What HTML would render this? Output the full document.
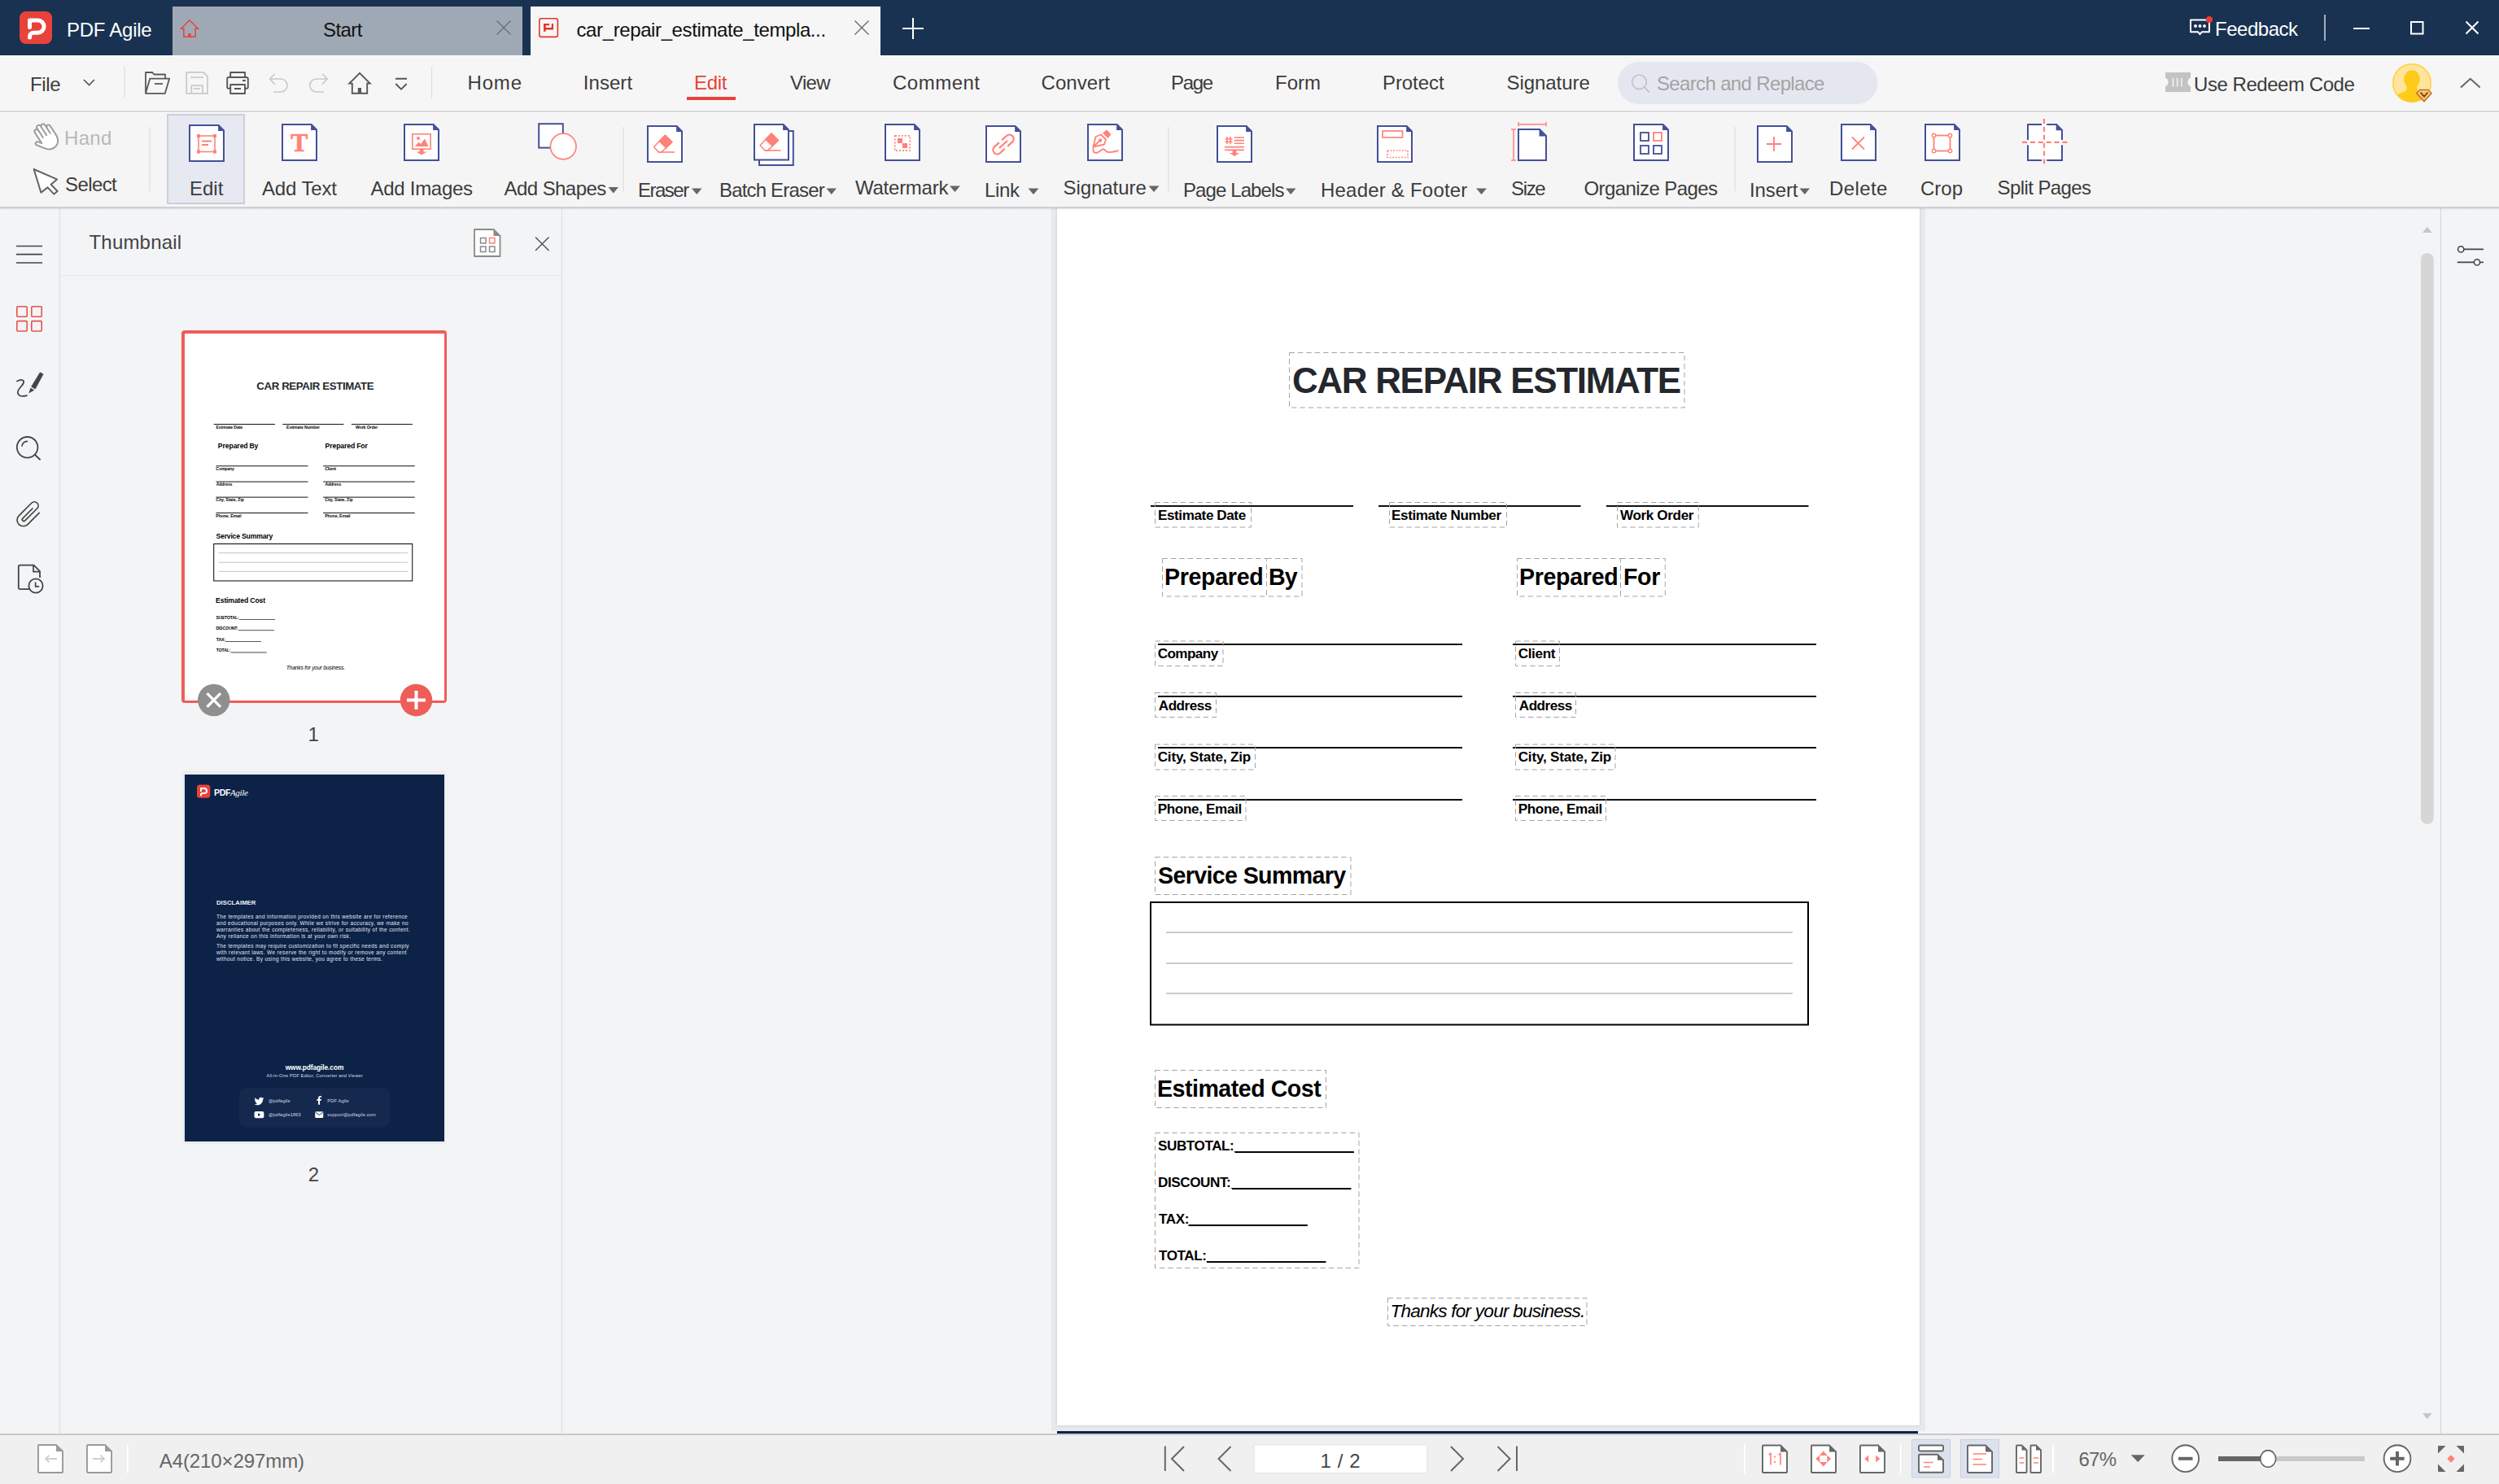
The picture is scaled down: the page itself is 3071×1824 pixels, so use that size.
<!DOCTYPE html>
<html lang="en"><head><meta charset="utf-8"><title>PDF Agile - car_repair_estimate_template</title>
<style>
html,body{margin:0;padding:0;width:3071px;height:1824px}
body{background:#f3f4f6;font-family:'Liberation Sans',sans-serif;position:relative}
#app{position:absolute;left:0;top:0;width:3071px;height:1824px;overflow:hidden}
.t{position:absolute;line-height:1;white-space:pre;margin:0}
.ico{position:absolute;left:0;top:0;overflow:visible}
.titlebar{position:absolute;left:0;top:0;width:3071px;height:68px;background:#193251;border-bottom:1px solid #fdfdfd;z-index:5}
.tab{position:absolute;top:8px;height:60px}
.tab-start{left:212px;width:430px;background:#9fa9b5}
.tab-active{left:652px;width:430px;background:#f6f6f6;height:61px}
.menubar{position:absolute;left:0;top:68px;width:3071px;height:67px;margin-top:1px;background:#f6f6f6;z-index:4}
.menubar .ico,.menubar .t{margin-top:-1px}
.ribbon{position:absolute;left:0;top:138px;width:3071px;height:116px;background:#f5f5f5;z-index:4;box-shadow:0 -2px 0 0 #dadada, inset 0 1px 0 0 #fafafa}
.ribbon-edge{position:absolute;left:0;top:253.5px;width:3071px;height:4.5px;z-index:6;background:linear-gradient(to bottom,#f5f5f5 0,#cfd0d6 9%,#cfd0d6 38%,rgba(150,150,150,.32) 42%,rgba(160,160,160,0) 100%)}
.btn-active{position:absolute;left:205px;top:2px;width:91.5px;height:107px;background:#e7e9f2;border:2px solid #cdced5}
.sidebar{position:absolute;left:0;top:256px;width:73px;height:1507px;border-right:1px solid #dcdcde;background:#f3f4f6}
.thumb-panel{position:absolute;left:74px;top:256px;width:616px;height:1507px;border-right:1px solid #dcdcde;background:#f3f4f6}
.panel-head{position:absolute;left:0;top:0;width:616px;height:82px;border-bottom:1px solid #e7e7ea}
.thumb{position:absolute}
.thumb-1{left:149px;top:150px;width:317.75px;height:450px;border:4px solid #ee5d57;border-radius:4px;background:#fff}
.thumb-1 .thumb-page{left:-.5px;top:-.5px}
.thumb-2{left:150px;top:692px;width:323.5px;height:458px;background:#ebecef;border-radius:2px}
.thumb-page{position:absolute;left:0;top:0;width:319px;height:451px;overflow:hidden;background:#fff}
.thumb-2 .thumb-page{left:2.75px;top:4px;height:450.75px}
.thumb-page.dark{background:#0c2247}
.mini{position:absolute;left:1.3px;top:.2px;width:1060px;height:1499px;transform:scale(0.302);transform-origin:0 0}
.disc{position:absolute;margin:0;font-size:6.5px;line-height:8.03px;letter-spacing:.36px;color:#e3e7ef;white-space:pre}
.doc-view{position:absolute;left:691px;top:256px;width:2380px;height:1507px;overflow:hidden;background:#f3f4f6}
.pdf-page{position:absolute;width:1060px;height:1499px;background:#fff;box-shadow:0 0 3px 0 rgba(0,0,0,.16),0 0 0 7px #e8e9ec}
.next-page{position:absolute;width:1058px;height:10px;background:#0c2247}
.statusbar{position:absolute;left:0;top:1762px;width:3071px;height:62px;background:#f0f0f0;border-top:2px solid #c9c9c9;box-sizing:border-box}
.statusbar .ico{top:-1px}.statusbar .t{margin-top:-1px}
</style></head>
<body><div id="app">
<header class="titlebar"><div class="tab tab-start"></div><div class="tab tab-active"></div><svg class="ico" width="3071" height="68" viewBox="0 0 3071 68"><rect x="24" y="14" width="40" height="40" rx="8" fill="#e8433a"/><path d="M36.5,33.5 V25 H46.5 a7.6,7.6 0 0 1 0,15.2 H41.2 a4.7,4.7 0 0 0 -4.7,4.7 V46" fill="none" stroke="#fff" stroke-width="5" stroke-linecap="round" stroke-linejoin="round"/><path d="M233,24.8 L222.6,35.3 H225.8 V45.3 H240.2 V35.3 H243.4 Z" fill="none" stroke="#e8433a" stroke-width="1.5" stroke-linejoin="miter"/><rect x="231.3" y="41" width="3.4" height="4.3" fill="#e8433a"/><path d="M610.5,25.5 L627.5,42.5 M627.5,25.5 L610.5,42.5" stroke="#6a6f76" stroke-width="1.4"/><rect x="662.8" y="22.8" width="22.6" height="22.6" rx="2.5" fill="none" stroke="#e6352b" stroke-width="1.6"/><path d="M668,29 H675 V31.2 H670.7 V34 H677.8 V29 H680 V36.5 H670.7 V38.8 H668 Z" fill="#e6352b"/><path d="M1050.5,25.5 L1067.5,42.5 M1067.5,25.5 L1050.5,42.5" stroke="#6a6a6a" stroke-width="1.4"/><path d="M1109,35 H1135 M1122,22 V48" stroke="#fff" stroke-width="2"/><path d="M2692,24.5 H2715 V39.2 H2706 L2703.5,42.2 L2701,39.2 H2692 Z" fill="none" stroke="#fff" stroke-width="2" stroke-linejoin="round"/><circle cx="2698" cy="32" r="1.9" fill="#fff"/><circle cx="2703.5" cy="32" r="1.9" fill="#fff"/><circle cx="2709" cy="32" r="1.9" fill="#fff"/><circle cx="2715" cy="24" r="4" fill="#ee3b33"/><path d="M2857,18 V50" stroke="#c9ced6" stroke-width="1.6"/><path d="M2892,35 H2912" stroke="#fff" stroke-width="2"/><rect x="2963" y="27" width="14.5" height="14.5" fill="none" stroke="#fff" stroke-width="2"/><path d="M3030.5,26.5 L3045.5,41.5 M3045.5,26.5 L3030.5,41.5" stroke="#fff" stroke-width="2"/></svg><span class="t" style="left:82.0px;top:25.0px;font-size:24px;color:#fff;letter-spacing:-0.25px;">PDF Agile</span>
<span class="t" style="left:397.0px;top:25.0px;font-size:24px;color:#111;letter-spacing:-0.56px;">Start</span>
<span class="t" style="left:708.5px;top:25.0px;font-size:24px;color:#111;letter-spacing:-0.39px;">car_repair_estimate_templa...</span>
<span class="t" style="left:2722.0px;top:24.0px;font-size:24px;color:#fff;letter-spacing:-0.47px;">Feedback</span></header>
<nav class="menubar"><svg class="ico" width="3071" height="70" viewBox="0 68 3071 70"><path d="M103,98 L109.5,104.5 L116,98" fill="none" stroke="#585858" stroke-width="1.7"/><path d="M153,82 V121 M530.5,82 V121" stroke="#dedede" stroke-width="1.2"/><g fill="none" stroke="#585858" stroke-width="1.8" stroke-linejoin="round"><path d="M179,114.8 V89 H187.3 L189.3,91.5 H203 V96.6"/><path d="M184.3,96.6 H208.2 L202.8,114.8 H179 Z"/><path d="M190,103 H200"/></g><g fill="none" stroke="#c9c9c9" stroke-width="1.7" stroke-linejoin="round"><path d="M229.2,88.9 H250 L255,93.8 V114.9 H229.2 Z"/><path d="M234,95 H250"/><path d="M235.3,114.9 V105.2 H249 V114.9"/><path d="M238.3,109 H246"/></g><g fill="none" stroke="#585858" stroke-width="1.9" stroke-linejoin="round"><path d="M283.2,95 V89 H301 V95"/><path d="M283.2,108.8 H281 a1.8,1.8 0 0 1 -1.8,-1.8 V96.8 a1.8,1.8 0 0 1 1.8,-1.8 H303 a1.8,1.8 0 0 1 1.8,1.8 V107 a1.8,1.8 0 0 1 -1.8,1.8 H301"/><rect x="283.2" y="104" width="17.8" height="11"/><path d="M298,99 H301.8 M288,109 H296"/></g><g fill="none" stroke="#c9c9c9" stroke-width="1.6"><path d="M337.8,90.8 L331.6,97 L337.8,103.6"/><path d="M332,97 H345 a8,8 0 0 1 0,16 H336"/></g><g fill="none" stroke="#c9c9c9" stroke-width="1.6"><path d="M396,90.8 L402.2,97 L396,103.6"/><path d="M401.8,97 H388.8 a8,8 0 0 0 0,16 H397.8"/></g><path d="M442,89.8 L429.3,102.6 H432.8 V114.8 H451.2 V102.6 H454.7 Z" fill="none" stroke="#585858" stroke-width="1.9"/><rect x="439.8" y="108" width="4.2" height="6.8" fill="#585858"/><path d="M486,96.8 H500 M486.3,103 L493,109.6 L499.7,103" fill="none" stroke="#585858" stroke-width="1.9"/><rect x="844" y="119" width="60" height="4" fill="#e8423a"/><rect x="1988" y="76" width="319.5" height="52" rx="26" fill="#e5e7f0"/><circle cx="2014.5" cy="100.8" r="8.8" fill="none" stroke="#c2c2c2" stroke-width="1.7"/><path d="M2020.8,107.2 L2027,113.6" stroke="#c2c2c2" stroke-width="1.9"/><path d="M2661,89 H2692 V96 A3.6,5 0 0 0 2692,106 V113 H2661 V106 A3.6,5 0 0 0 2661,96 Z" fill="#c3c3c3"/><path d="M2670.4,96 V106.6 M2675.7,96 V106.6 M2681,96 V106.6" stroke="#ededed" stroke-width="1.9"/><defs><clipPath id="avc"><circle cx="2964" cy="102" r="23.6"/></clipPath></defs><circle cx="2964" cy="102" r="24" fill="#ffe59b"/><circle cx="2964" cy="102" r="23.2" fill="none" stroke="#ffd040" stroke-width="1.5"/><g clip-path="url(#avc)" fill="#ffcb1a"><ellipse cx="2964" cy="97.4" rx="9.9" ry="11.2"/><path d="M2957.5,104 V109 C2957.5,111.5 2955,112.6 2951,114 C2946,116 2943.5,119 2942.5,124 V130 H2985.5 V124 C2984.5,119 2982,116 2977,114 C2973,112.6 2970.5,111.5 2970.5,109 V104 Z"/></g><path d="M2969.6,114.6 L2973.6,110.4 H2984.4 L2988.2,114.6 L2979,124.8 Z" fill="#f6c06e" stroke="#b06a1e" stroke-width="1.3" stroke-linejoin="round"/><path d="M2974.6,113.6 L2979,118.6 L2983.4,113.6" fill="none" stroke="#7d3f0c" stroke-width="1.7"/><path d="M3024,107.5 L3035.8,96.8 L3047.6,107.5" fill="none" stroke="#666" stroke-width="2"/></svg><span class="t" style="left:37.0px;top:23.5px;font-size:24px;color:#3c3c3c;letter-spacing:-0.33px;">File</span>
<span class="t" style="left:574.5px;top:22.0px;font-size:24px;color:#3c3c3c;letter-spacing:0.83px;">Home</span>
<span class="t" style="left:716.8px;top:22.0px;font-size:24px;color:#3c3c3c;letter-spacing:0.05px;">Insert</span>
<span class="t" style="left:971.0px;top:22.0px;font-size:24px;color:#3c3c3c;letter-spacing:-0.67px;">View</span>
<span class="t" style="left:1097.0px;top:22.0px;font-size:24px;color:#3c3c3c;letter-spacing:0.50px;">Comment</span>
<span class="t" style="left:1279.5px;top:22.0px;font-size:24px;color:#3c3c3c;letter-spacing:0.08px;">Convert</span>
<span class="t" style="left:1439.0px;top:22.0px;font-size:24px;color:#3c3c3c;letter-spacing:-1.33px;">Page</span>
<span class="t" style="left:1567.0px;top:22.0px;font-size:24px;color:#3c3c3c;">Form</span>
<span class="t" style="left:1699.0px;top:22.0px;font-size:24px;color:#3c3c3c;letter-spacing:-0.08px;">Protect</span>
<span class="t" style="left:1851.5px;top:22.0px;font-size:24px;color:#3c3c3c;letter-spacing:-0.06px;">Signature</span>
<span class="t" style="left:853.0px;top:22.0px;font-size:24px;color:#e8423a;letter-spacing:-0.33px;">Edit</span>
<span class="t" style="left:2036.0px;top:22.5px;font-size:24px;color:#a3a3a3;letter-spacing:-0.65px;">Search and Replace</span>
<span class="t" style="left:2696.0px;top:23.5px;font-size:24px;color:#3c3c3c;letter-spacing:-0.45px;">Use Redeem Code</span></nav>
<section class="ribbon"><div class="btn-active"></div><svg class="ico" width="3071" height="118" viewBox="0 138 3071 118"><g transform="translate(37.2,148.6) rotate(-33 18 18) scale(1.13)" fill="#fff" stroke="#9c9c9c" stroke-width="1.75" stroke-linejoin="round" stroke-linecap="round"><path d="M8.5,21 V7.2 a2.25,2.25 0 0 1 4.5,0 V4.8 a2.3,2.3 0 0 1 4.6,0 V6.3 a2.3,2.3 0 0 1 4.6,0 V10.2 a2.15,2.15 0 0 1 4.3,0 V21 c0,7.5 -4,11.5 -9.5,11.5 c-4.5,0 -6.6,-1.8 -9,-5.4 L2.7,19.6 c-1.2,-2 1.5,-3.8 3.2,-2 Z"/><path d="M13,7.2 V16.5 M17.6,6.3 V16.5 M22.2,10.2 V17" fill="none"/></g><path d="M41.6,208 L70,220.4 L62.6,226.8 L70.6,235 L66.4,238.6 L58.6,230.4 L50.4,236.6 Z" fill="#fff" stroke="#646464" stroke-width="2" stroke-linejoin="round"/><path d="M184,156 V235" stroke="#dedede" stroke-width="1.2"/><path d="M766,156 V235" stroke="#dedede" stroke-width="1.2"/><path d="M1436,156 V235" stroke="#dedede" stroke-width="1.2"/><path d="M2132,156 V235" stroke="#dedede" stroke-width="1.2"/><path d="M233.0,154.0 H268.6 L275.0,160.4 V198.0 H233.0 Z" fill="#fff" stroke="#444f98" stroke-width="2" stroke-linejoin="miter"/><path d="M268.1,154.0 V160.9 H275.0 Z" fill="#444f98"/><rect x="244" y="167" width="20" height="19.5" fill="none" stroke="#ff8279" stroke-width="1.6"/><rect x="242" y="165" width="4" height="4" fill="#ff8279"/><rect x="262" y="165" width="4" height="4" fill="#ff8279"/><rect x="242" y="184.5" width="4" height="4" fill="#ff8279"/><rect x="262" y="184.5" width="4" height="4" fill="#ff8279"/><path d="M248,173.5 h12 M248,178 h8" stroke="#ff8279" stroke-width="1.8"/><path d="M347.0,153.0 H382.6 L389.0,159.4 V197.0 H347.0 Z" fill="#fff" stroke="#444f98" stroke-width="2" stroke-linejoin="miter"/><path d="M382.1,153.0 V159.9 H389.0 Z" fill="#444f98"/><text x="367.8" y="185.8" text-anchor="middle" font-family="Liberation Serif, serif" font-weight="700" font-size="31.5" fill="#ff8279" stroke="#ff8279" stroke-width="0.7">T</text><path d="M497.0,153.0 H532.6 L539.0,159.4 V197.0 H497.0 Z" fill="#fff" stroke="#444f98" stroke-width="2" stroke-linejoin="miter"/><path d="M532.1,153.0 V159.9 H539.0 Z" fill="#444f98"/><rect x="506.8" y="164.8" width="22.4" height="18.4" fill="none" stroke="#ff8279" stroke-width="1.6"/><circle cx="514" cy="170" r="2" fill="#ff8279"/><path d="M510,180 l4.5,-5.5 l2.5,2.5 l5,-6.5 l4.5,9.5 Z" fill="#ff8279"/><path d="M515.5,184 h5 v2.5 h4.2 l-6.7,4 l-6.7,-4 h4.2 Z" fill="#ff8279"/><rect x="662.2" y="152.2" width="29.6" height="29.4" fill="#fff" stroke="#444f98" stroke-width="2"/><circle cx="692.2" cy="180" r="15.8" fill="#fff" stroke="#ff8279" stroke-width="1.7"/><path d="M796.0,155.0 H831.6 L838.0,161.4 V199.0 H796.0 Z" fill="#fff" stroke="#444f98" stroke-width="2" stroke-linejoin="miter"/><path d="M831.1,155.0 V161.9 H838.0 Z" fill="#444f98"/><path d="M817.4,166.2 L825.8,174.6 L813.0,187.0 L809.3,187.0 L803.6,180.6 Z" fill="#fff" stroke="#ff8279" stroke-width="1.5" stroke-linejoin="round"/><path d="M817.4,166.2 L825.8,174.6 L818.6,181.6 L810.2,173.4 Z" fill="#ff8279" stroke="#ff8279" stroke-width="1.5" stroke-linejoin="round"/><path d="M809.3,187.0 H829.0" stroke="#ff8279" stroke-width="1.6"/><path d="M933,161 H974.8 V203 H933 Z" fill="#fff" stroke="#444f98" stroke-width="2"/><path d="M927.0,153.0 H962.6 L969.0,159.4 V196.5 H927.0 Z" fill="#fff" stroke="#444f98" stroke-width="2" stroke-linejoin="miter"/><path d="M962.1,153.0 V159.9 H969.0 Z" fill="#444f98"/><path d="M948.0,164.1 L956.4,172.5 L943.6,184.9 L939.9,184.9 L934.2,178.5 Z" fill="#fff" stroke="#ff8279" stroke-width="1.5" stroke-linejoin="round"/><path d="M948.0,164.1 L956.4,172.5 L949.2,179.5 L940.8,171.3 Z" fill="#ff8279" stroke="#ff8279" stroke-width="1.5" stroke-linejoin="round"/><path d="M939.9,184.9 H959.6" stroke="#ff8279" stroke-width="1.6"/><path d="M1088.0,153.0 H1123.6 L1130.0,159.4 V197.0 H1088.0 Z" fill="#fff" stroke="#444f98" stroke-width="2" stroke-linejoin="miter"/><path d="M1123.1,153.0 V159.9 H1130.0 Z" fill="#444f98"/><rect x="1099.8" y="166.8" width="18.4" height="18.4" fill="none" stroke="#ff8279" stroke-width="1.7" stroke-dasharray="2 2"/><rect x="1103" y="170" width="6" height="6" fill="#ff8279"/><rect x="1109" y="176" width="6" height="6" fill="#ff8279"/><path d="M1212.0,155.0 H1247.6 L1254.0,161.4 V199.0 H1212.0 Z" fill="#fff" stroke="#444f98" stroke-width="2" stroke-linejoin="miter"/><path d="M1247.1,155.0 V161.9 H1254.0 Z" fill="#444f98"/><g transform="rotate(-42 1233 177.5)" fill="none" stroke="#ff8279" stroke-width="2.2" stroke-linecap="round"><path d="M1230,172.3 h-7 a5.2,5.2 0 0 0 0,10.4 h7"/><path d="M1236,172.3 h7 a5.2,5.2 0 0 1 0,10.4 h-7"/><path d="M1227,177.5 h12"/></g><path d="M1337.0,153.0 H1372.6 L1379.0,159.4 V197.0 H1337.0 Z" fill="#fff" stroke="#444f98" stroke-width="2" stroke-linejoin="miter"/><path d="M1372.1,153.0 V159.9 H1379.0 Z" fill="#444f98"/><g fill="none" stroke="#ff8279" stroke-width="1.8" stroke-linecap="round" stroke-linejoin="round"><path d="M1343.5,180.5 l3,-12.5 l6.5,-2.5 l6,6 l-2,6 Z"/><path d="M1343.5,180.5 l8,-7.5"/><circle cx="1352" cy="172.5" r="1.3" fill="#ff8279"/><path d="M1345,178 c-3,5 -2,10 2,10 c4,0 6,-5 9,-4.5 c3,0.5 2,3 6,3.5 c4,0.3 8,-0.5 12,-1.8"/></g><path d="M1355,163.5 l5,-4 l5.5,5.5 l-4,5 Z" fill="#ff8279"/><path d="M1496.0,155.0 H1531.6 L1538.0,161.4 V199.0 H1496.0 Z" fill="#fff" stroke="#444f98" stroke-width="2" stroke-linejoin="miter"/><path d="M1531.1,155.0 V161.9 H1538.0 Z" fill="#444f98"/><g stroke="#ff8279" stroke-width="1.6" fill="none"><path d="M1508,168 v9 M1512,168 v9 M1505.5,170.8 h9 M1505.5,174.3 h9"/><path d="M1516.5,169 h12.5 M1516.5,172.6 h12.5 M1516.5,176.2 h12.5 M1505,180.6 h24 M1505,184.4 h24"/></g><path d="M1514.7,185 h4.6 v3 h3.8 l-6.1,4 l-6.1,-4 h3.8 Z" fill="#ff8279"/><path d="M1693.0,155.0 H1728.6 L1735.0,161.4 V199.0 H1693.0 Z" fill="#fff" stroke="#444f98" stroke-width="2" stroke-linejoin="miter"/><path d="M1728.1,155.0 V161.9 H1735.0 Z" fill="#444f98"/><rect x="1699" y="161" width="24.5" height="8" fill="none" stroke="#ff8279" stroke-width="1.7"/><rect x="1705" y="185" width="25" height="8.5" fill="none" stroke="#ff8279" stroke-width="1.7" stroke-dasharray="1.8 1.8"/><path d="M1866.0,159.0 H1892.0 L1900.0,167.0 V197.0 H1866.0 Z" fill="#fff" stroke="#444f98" stroke-width="2" stroke-linejoin="miter"/><path d="M1891.5,159.0 V167.5 H1900.0 Z" fill="#444f98"/><path d="M1865.5,152.8 H1900.5 M1866,150 V155.6 M1900,150 V155.6 M1860,158.6 V197.4 M1857,159 H1863 M1857,197 H1863" stroke="#ff8279" stroke-width="1.5" fill="none"/><path d="M2008.0,153.0 H2043.6 L2050.0,159.4 V197.0 H2008.0 Z" fill="#fff" stroke="#444f98" stroke-width="2" stroke-linejoin="miter"/><path d="M2043.1,153.0 V159.9 H2050.0 Z" fill="#444f98"/><rect x="2016" y="163" width="10" height="10" fill="none" stroke="#444f98" stroke-width="1.8"/><rect x="2032" y="163" width="10" height="10" fill="none" stroke="#ff8279" stroke-width="1.8"/><rect x="2016" y="179" width="10" height="10" fill="none" stroke="#444f98" stroke-width="1.8"/><rect x="2032" y="179" width="10" height="10" fill="none" stroke="#444f98" stroke-width="1.8"/><path d="M2160.0,155.0 H2195.6 L2202.0,161.4 V199.0 H2160.0 Z" fill="#fff" stroke="#444f98" stroke-width="2" stroke-linejoin="miter"/><path d="M2195.1,155.0 V161.9 H2202.0 Z" fill="#444f98"/><path d="M2171,177 h18 M2180,168 v18" stroke="#ff8279" stroke-width="1.8" fill="none"/><path d="M2263.0,153.0 H2298.6 L2305.0,159.4 V197.0 H2263.0 Z" fill="#fff" stroke="#444f98" stroke-width="2" stroke-linejoin="miter"/><path d="M2298.1,153.0 V159.9 H2305.0 Z" fill="#444f98"/><path d="M2276.0,168.5 l15,15 M2291.0,168.5 l-15,15" stroke="#ff8279" stroke-width="1.8" fill="none"/><path d="M2366.0,153.0 H2401.6 L2408.0,159.4 V197.0 H2366.0 Z" fill="#fff" stroke="#444f98" stroke-width="2" stroke-linejoin="miter"/><path d="M2401.1,153.0 V159.9 H2408.0 Z" fill="#444f98"/><rect x="2376.5" y="166.5" width="20.0" height="19.0" fill="none" stroke="#ff8279" stroke-width="1.8"/><circle cx="2376.5" cy="166.5" r="2.2" fill="#fff" stroke="#ff8279" stroke-width="1.4"/><circle cx="2396.5" cy="166.5" r="2.2" fill="#fff" stroke="#ff8279" stroke-width="1.4"/><circle cx="2376.5" cy="185.5" r="2.2" fill="#fff" stroke="#ff8279" stroke-width="1.4"/><circle cx="2396.5" cy="185.5" r="2.2" fill="#fff" stroke="#ff8279" stroke-width="1.4"/><path d="M2492.0,153.0 H2527.2 L2534.0,159.8 V197.0 H2492.0 Z" fill="#fff" stroke="#444f98" stroke-width="2" stroke-linejoin="miter"/><path d="M2526.7,153.0 V160.3 H2534.0 Z" fill="#444f98"/><path d="M2509,153 H2515.2 M2509,197 H2515.2 M2492,171.9 V178.2 M2534,171.9 V178.2" stroke="#fafafa" stroke-width="2.6"/><path d="M2512,146 V202 M2485,174.9 H2541.2" stroke="#ff8279" stroke-width="2.1" stroke-dasharray="6 3.9" fill="none"/><path d="M747.5,230.0 H760 L753.75,237.5 Z" fill="#666"/><path d="M850,231.5 H862.5 L856.25,239 Z" fill="#666"/><path d="M1015.5,231.5 H1028 L1021.75,239 Z" fill="#666"/><path d="M1167,228.5 H1180 L1173.5,236 Z" fill="#666"/><path d="M1263.5,231.5 H1276.5 L1270.0,239 Z" fill="#666"/><path d="M1411.5,228.5 H1424.5 L1418.0,236 Z" fill="#666"/><path d="M1580,231.5 H1592.5 L1586.25,239 Z" fill="#666"/><path d="M1814,231.5 H1827 L1820.5,239 Z" fill="#666"/><path d="M2211.5,231.5 H2224 L2217.75,239 Z" fill="#666"/></svg><span class="t" style="left:79.0px;top:20.0px;font-size:24px;color:#b9b9b9;letter-spacing:0.33px;">Hand</span>
<span class="t" style="left:80.0px;top:77.0px;font-size:24px;color:#3c3c3c;letter-spacing:-0.60px;">Select</span>
<span class="t" style="left:233.0px;top:82.0px;font-size:24px;color:#3c3c3c;">Edit</span>
<span class="t" style="left:322.0px;top:81.5px;font-size:24px;color:#3c3c3c;letter-spacing:-0.14px;">Add Text</span>
<span class="t" style="left:455.5px;top:81.5px;font-size:24px;color:#3c3c3c;letter-spacing:-0.28px;">Add Images</span>
<span class="t" style="left:619.5px;top:82.0px;font-size:24px;color:#3c3c3c;letter-spacing:-0.56px;">Add Shapes</span>
<span class="t" style="left:784.0px;top:83.5px;font-size:24px;color:#3c3c3c;letter-spacing:-1.50px;">Eraser</span>
<span class="t" style="left:884.0px;top:83.5px;font-size:24px;color:#3c3c3c;letter-spacing:-0.82px;">Batch Eraser</span>
<span class="t" style="left:1051.0px;top:80.5px;font-size:24px;color:#3c3c3c;letter-spacing:-0.25px;">Watermark</span>
<span class="t" style="left:1210.0px;top:83.5px;font-size:24px;color:#3c3c3c;letter-spacing:-0.33px;">Link</span>
<span class="t" style="left:1306.5px;top:80.5px;font-size:24px;color:#3c3c3c;letter-spacing:-0.06px;">Signature</span>
<span class="t" style="left:1454.0px;top:83.5px;font-size:24px;color:#3c3c3c;letter-spacing:-0.90px;">Page Labels</span>
<span class="t" style="left:1623.0px;top:83.5px;font-size:24px;color:#3c3c3c;letter-spacing:0.21px;">Header &amp; Footer</span>
<span class="t" style="left:1857.0px;top:81.5px;font-size:24px;color:#3c3c3c;letter-spacing:-1.33px;">Size</span>
<span class="t" style="left:1946.5px;top:81.5px;font-size:24px;color:#3c3c3c;letter-spacing:-0.58px;">Organize Pages</span>
<span class="t" style="left:2150.0px;top:83.5px;font-size:24px;color:#3c3c3c;letter-spacing:-0.10px;">Insert</span>
<span class="t" style="left:2248.0px;top:81.5px;font-size:24px;color:#3c3c3c;letter-spacing:0.40px;">Delete</span>
<span class="t" style="left:2360.0px;top:81.5px;font-size:24px;color:#3c3c3c;">Crop</span>
<span class="t" style="left:2454.6px;top:81.0px;font-size:24px;color:#3c3c3c;letter-spacing:-0.59px;">Split Pages</span></section><div class="ribbon-edge"></div>
<main class="workspace"><aside class="sidebar"><svg class="ico" width="74" height="1507" viewBox="0 256 74 1507"><path d="M20,302.5 H52 M20,312.7 H52 M20,323 H52" stroke="#444" stroke-width="1.7"/><rect x="20.8" y="376.8" width="12.4" height="12.4" rx="1" fill="none" stroke="#e9524a" stroke-width="1.6"/><rect x="38.8" y="376.8" width="12.4" height="12.4" rx="1" fill="none" stroke="#e9524a" stroke-width="1.6"/><rect x="20.8" y="394.6" width="12.4" height="12.4" rx="1" fill="none" stroke="#e9524a" stroke-width="1.6"/><rect x="38.8" y="394.6" width="12.4" height="12.4" rx="1" fill="none" stroke="#e9524a" stroke-width="1.6"/><path d="M21,468.5 c6,-3.500 9.500,-1 7.500,3 c-1.800,3.600 -8,7.500 -6.500,12 c1.200,3.600 6,4 11,2.600" fill="none" stroke="#444" stroke-width="1.8" stroke-linecap="round"/><path d="M49.300,457.800 L53,459.900 L43.300,478 L38.600,475.300 Z" fill="#444" stroke="#444" stroke-width="0.8" stroke-linejoin="round"/><path d="M37.600,476.800 L42.200,479.400 L35.200,483.600 Z" fill="#444"/><circle cx="33.6" cy="549.8" r="12.8" fill="none" stroke="#444" stroke-width="1.8"/><path d="M42.800,558.800 L49.600,565.200" stroke="#444" stroke-width="1.9"/><path d="M27,548 a7,7 0 0 1 6.500,-5.600" fill="none" stroke="#444" stroke-width="1.6" stroke-linecap="round"/><g transform="rotate(135 35 632.800)"><path d="M24,625.200 h20 a7.600,7.600 0 0 1 0,15.200 h-22 a4.800,4.800 0 0 1 0,-9.600 h21 a2,2 0 0 1 0,4 h-17" fill="none" stroke="#444" stroke-width="1.7" stroke-linecap="round"/></g><path d="M41.200,724.200 H24.600 a1.800,1.800 0 0 1 -1.800,-1.800 V696.400 a1.800,1.800 0 0 1 1.800,-1.800 H41.500 L49,702.200 V710" fill="none" stroke="#444" stroke-width="1.8" stroke-linejoin="round"/><path d="M41,695 V702.600 H48.800" fill="none" stroke="#444" stroke-width="1.7"/><circle cx="44" cy="720" r="8.600" fill="#f3f4f6" stroke="#444" stroke-width="1.8"/><path d="M43.600,715.400 V720.800 H48.200" fill="none" stroke="#444" stroke-width="1.7"/></svg></aside>
<aside class="thumb-panel"><div class="panel-head"></div><div class="thumb thumb-1"><div class="thumb-page"><div class="mini"><svg class="ico" width="1060" height="1499" viewBox="0 0 1060 1499"><rect x="115" y="367.35" width="249" height="3.3" fill="#111"/><rect x="395" y="367.35" width="248.5" height="3.3" fill="#111"/><rect x="675" y="367.35" width="248.5" height="3.3" fill="#111"/><rect x="124" y="537.35" width="374" height="3.3" fill="#111"/><rect x="560" y="537.35" width="373" height="3.3" fill="#111"/><rect x="124" y="601.35" width="374" height="3.3" fill="#111"/><rect x="560" y="601.35" width="373" height="3.3" fill="#111"/><rect x="124" y="664.35" width="374" height="3.3" fill="#111"/><rect x="560" y="664.35" width="373" height="3.3" fill="#111"/><rect x="124" y="728.35" width="374" height="3.3" fill="#111"/><rect x="560" y="728.35" width="373" height="3.3" fill="#111"/><rect x="115" y="856" width="808" height="150.5" fill="none" stroke="#000" stroke-width="3.3"/><rect x="134" y="891.5" width="770" height="3" fill="#bcbcbc"/><rect x="134" y="929.5" width="770" height="3" fill="#bcbcbc"/><rect x="134" y="966.5" width="770" height="3" fill="#bcbcbc"/><rect x="218.5" y="1162.15" width="146.5" height="1.9" fill="#000"/><rect x="215" y="1207.15" width="146.5" height="1.9" fill="#000"/><rect x="161.5" y="1252.15" width="146.25" height="1.9" fill="#000"/><rect x="184" y="1297.15" width="146.5" height="1.9" fill="#000"/></svg><span class="t" style="left:288.9px;top:192.8px;font-size:44.0px;color:#24272d;letter-spacing:-1.32px;font-weight:700;">CAR REPAIR ESTIMATE</span>
<span class="t" style="left:124.0px;top:372.0px;font-size:17.1px;color:#000;letter-spacing:-0.41px;font-weight:700;">Estimate Date</span>
<span class="t" style="left:411.0px;top:372.0px;font-size:17.1px;color:#000;letter-spacing:-0.39px;font-weight:700;">Estimate Number</span>
<span class="t" style="left:692.0px;top:372.0px;font-size:17.1px;color:#000;letter-spacing:-0.36px;font-weight:700;">Work Order</span>
<span class="t" style="left:131.9px;top:442.0px;font-size:28.6px;color:#000;letter-spacing:-0.31px;font-weight:700;">Prepared</span>
<span class="t" style="left:259.9px;top:442.0px;font-size:28.6px;color:#000;letter-spacing:-0.70px;font-weight:700;">By</span>
<span class="t" style="left:567.9px;top:442.0px;font-size:28.6px;color:#000;letter-spacing:-0.31px;font-weight:700;">Prepared</span>
<span class="t" style="left:695.9px;top:442.0px;font-size:28.6px;color:#000;letter-spacing:-0.26px;font-weight:700;">For</span>
<span class="t" style="left:123.7px;top:542.0px;font-size:17.1px;color:#000;letter-spacing:-0.57px;font-weight:700;">Company</span>
<span class="t" style="left:566.7px;top:542.0px;font-size:17.1px;color:#000;letter-spacing:-0.33px;font-weight:700;">Client</span>
<span class="t" style="left:124.8px;top:605.5px;font-size:17.1px;color:#000;letter-spacing:-0.48px;font-weight:700;">Address</span>
<span class="t" style="left:567.8px;top:605.5px;font-size:17.1px;color:#000;letter-spacing:-0.48px;font-weight:700;">Address</span>
<span class="t" style="left:123.7px;top:669.0px;font-size:17.1px;color:#000;letter-spacing:-0.19px;font-weight:700;">City, State, Zip</span>
<span class="t" style="left:566.7px;top:669.0px;font-size:17.1px;color:#000;letter-spacing:-0.19px;font-weight:700;">City, State, Zip</span>
<span class="t" style="left:123.7px;top:732.5px;font-size:17.1px;color:#000;letter-spacing:-0.34px;font-weight:700;">Phone, Email</span>
<span class="t" style="left:566.7px;top:732.5px;font-size:17.1px;color:#000;letter-spacing:-0.34px;font-weight:700;">Phone, Email</span>
<span class="t" style="left:124.0px;top:809.3px;font-size:28.6px;color:#000;letter-spacing:-0.63px;font-weight:700;">Service Summary</span>
<span class="t" style="left:122.9px;top:1070.8px;font-size:28.6px;color:#000;letter-spacing:-0.48px;font-weight:700;">Estimated Cost</span>
<span class="t" style="left:124.0px;top:1146.8px;font-size:17.1px;color:#000;letter-spacing:-0.42px;font-weight:700;">SUBTOTAL:________________</span>
<span class="t" style="left:124.0px;top:1191.8px;font-size:17.1px;color:#000;letter-spacing:-0.42px;font-weight:700;">DISCOUNT:________________</span>
<span class="t" style="left:125.0px;top:1236.8px;font-size:17.1px;color:#000;letter-spacing:-0.42px;font-weight:700;">TAX:________________</span>
<span class="t" style="left:125.0px;top:1281.8px;font-size:17.1px;color:#000;letter-spacing:-0.42px;font-weight:700;">TOTAL:________________</span>
<span class="t" style="left:409.4px;top:1348.4px;font-size:22.6px;color:#000;letter-spacing:-0.78px;font-style:italic;">Thanks for your business.</span></div></div></div><div class="thumb thumb-2"><div class="thumb-page dark"><svg class="ico" width="319" height="451" viewBox="0 0 319 451"><rect x="15.0" y="12.5" width="16.3" height="16.3" rx="3.5" fill="#e8433a"/><path d="M19.94999999999999,20.299999999999955 v-3.4 h4 a3,3 0 0 1 0,6.1 h-2.1 a1.9,1.9 0 0 0 -1.9,1.9 v0.6" fill="none" stroke="#fff" stroke-width="2" stroke-linecap="round" stroke-linejoin="round"/><rect x="66.85000000000002" y="385" width="185.4" height="48.7" rx="9" fill="#15294f"/><path transform="translate(85.55,395.60) scale(0.49)" d="M23.953 4.57a10 10 0 01-2.825.775 4.958 4.958 0 002.163-2.723c-.951.555-2.005.959-3.127 1.184a4.92 4.92 0 00-8.384 4.482C7.69 8.095 4.067 6.13 1.64 3.162a4.822 4.822 0 00-.666 2.475c0 1.71.87 3.213 2.188 4.096a4.904 4.904 0 01-2.228-.616v.06a4.923 4.923 0 003.946 4.827 4.996 4.996 0 01-2.212.085 4.936 4.936 0 004.604 3.417 9.867 9.867 0 01-6.102 2.105c-.39 0-.779-.023-1.17-.067a13.995 13.995 0 007.557 2.209c9.053 0 13.998-7.496 13.998-13.985 0-.21 0-.42-.015-.63A9.935 9.935 0 0024 4.59z" fill="#fff"/><rect x="85.55000000000001" y="414" width="11.8" height="8.2" rx="2" fill="#fff"/><path d="M90.05000000000001,416.20000000000005 v3.8 l3.3,-1.9 Z" fill="#0c2247"/><path d="M166.05,405.79999999999995 v-5 h1.7 l0.3,-1.9 h-2 v-1.2 c0,-0.6 0.2,-0.9 1,-0.9 h1 v-1.7 c-0.2,0 -0.8,-0.1 -1.5,-0.1 c-1.500,0 -2.500,0.900 -2.500,2.600 v1.3 h-1.7 v1.9 h1.7 v5 Z" fill="#fff"/><rect x="160.25" y="414.29999999999995" width="10" height="7.6" rx="1" fill="#fff"/><path d="M160.55,415 l4.7,3.6 l4.7,-3.6" fill="none" stroke="#0c2247" stroke-width="0.9"/></svg><span class="t" style="left:36.2px;top:17.2px;font-size:10.6px;color:#fff;font-weight:700;letter-spacing:-0.3px;">PDF</span><span class="t" style="left:56.2px;top:17.3px;font-size:11px;color:#fff;font-style:italic;font-family:'Liberation Serif',serif;letter-spacing:-0.3px">Agile</span><span class="t" style="left:39.2px;top:153.6px;font-size:7.6px;color:#f0f3f8;font-weight:700;letter-spacing:0.12px;">DISCLAIMER</span><p class="disc" style="left:39.2px;top:170.6px">The templates and information provided on this website are for reference<br>and educational purposes only. While we strive for accuracy, we make no<br>warranties about the completeness, reliability, or suitability of the content.<br>Any reliance on this information is at your own risk.</p><p class="disc" style="left:39.2px;top:206.6px">The templates may require customization to fit specific needs and comply<br>with relevant laws. We reserve the right to modify or remove any content<br>without notice. By using this website, you agree to these terms.</p><span class="t" style="left:123.9px;top:355.9px;font-size:8.4px;color:#fff;font-weight:700;letter-spacing:-0.1px;">www.pdfagile.com</span><span class="t" style="left:100.8px;top:368.0px;font-size:5.7px;color:#d5dbe6;letter-spacing:0.14px;">All-in-One PDF Editor, Converter and Viewer</span><span class="t" style="left:103.2px;top:398.5px;font-size:5.7px;color:#d5dbe6;letter-spacing:0.12px;">@pdfagile</span><span class="t" style="left:103.2px;top:415.5px;font-size:5.7px;color:#d5dbe6;letter-spacing:0.12px;">@pdfagile1863</span><span class="t" style="left:175.6px;top:398.5px;font-size:5.7px;color:#d5dbe6;letter-spacing:0.12px;">PDF Agile</span><span class="t" style="left:175.6px;top:415.5px;font-size:5.7px;color:#d5dbe6;letter-spacing:0.12px;">support@pdfagile.com</span></div></div><svg class="ico" width="617" height="1507" viewBox="74 256 617 1507"><path d="M583,282 H606.5 L614.5,290 V315 H583 Z" fill="#fff" stroke="#8a8a8a" stroke-width="1.8" stroke-linejoin="round"/><path d="M606.5,282 V290 H614.5 Z" fill="#8a8a8a"/><rect x="590.5" y="292.5" width="6.5" height="6.5" fill="none" stroke="#8a8a8a" stroke-width="1.5"/><rect x="601.5" y="292.5" width="6.5" height="6.5" fill="none" stroke="#ff8279" stroke-width="1.5"/><rect x="590.5" y="303" width="6.5" height="6.5" fill="none" stroke="#8a8a8a" stroke-width="1.5"/><rect x="601.5" y="303" width="6.5" height="6.5" fill="none" stroke="#8a8a8a" stroke-width="1.5"/><path d="M658,291.5 L674.5,308 M674.5,291.5 L658,308" stroke="#555" stroke-width="1.5"/><circle cx="262.75" cy="860.5" r="19.8" fill="#8f8f8f"/><path d="M254.5,852.2 L271,868.8 M271,852.2 L254.5,868.8" stroke="#fff" stroke-width="3.2"/><circle cx="511.5" cy="860.5" r="19.8" fill="#ee5d57"/><path d="M500,860.5 H523 M511.5,849 V872" stroke="#fff" stroke-width="4"/></svg><span class="t" style="left:35.5px;top:29.5px;font-size:24px;color:#444;letter-spacing:0.19px;">Thumbnail</span>
<span class="t" style="left:304.5px;top:635.0px;font-size:24px;color:#444;">1</span>
<span class="t" style="left:304.7px;top:1175.7px;font-size:24px;color:#444;">2</span></aside>
<section class="doc-view"><article class="pdf-page" style="left:608px;top:-3px"><svg class="ico" width="1060" height="1499" viewBox="0 0 1060 1499"><rect x="115" y="368.0" width="249" height="2" fill="#111"/><rect x="395" y="368.0" width="248.5" height="2" fill="#111"/><rect x="675" y="368.0" width="248.5" height="2" fill="#111"/><rect x="124" y="538.0" width="374" height="2" fill="#111"/><rect x="560" y="538.0" width="373" height="2" fill="#111"/><rect x="124" y="602.0" width="374" height="2" fill="#111"/><rect x="560" y="602.0" width="373" height="2" fill="#111"/><rect x="124" y="665.0" width="374" height="2" fill="#111"/><rect x="560" y="665.0" width="373" height="2" fill="#111"/><rect x="124" y="729.0" width="374" height="2" fill="#111"/><rect x="560" y="729.0" width="373" height="2" fill="#111"/><rect x="115" y="856" width="808" height="150.5" fill="none" stroke="#000" stroke-width="2"/><rect x="134" y="892.25" width="770" height="1.5" fill="#bcbcbc"/><rect x="134" y="930.25" width="770" height="1.5" fill="#bcbcbc"/><rect x="134" y="967.25" width="770" height="1.5" fill="#bcbcbc"/><rect x="218.5" y="1162.15" width="146.5" height="1.9" fill="#000"/><rect x="215" y="1207.15" width="146.5" height="1.9" fill="#000"/><rect x="161.5" y="1252.15" width="146.25" height="1.9" fill="#000"/><rect x="184" y="1297.15" width="146.5" height="1.9" fill="#000"/><rect x="285.5" y="180.5" width="485.5" height="67.5" fill="none" stroke="#a4a4a4" stroke-width="1" stroke-dasharray="6.4 4"/><rect x="120.5" y="364.5" width="118.0" height="30.5" fill="none" stroke="#a4a4a4" stroke-width="1" stroke-dasharray="6.4 4"/><rect x="408.5" y="364.5" width="144.0" height="30.5" fill="none" stroke="#a4a4a4" stroke-width="1" stroke-dasharray="6.4 4"/><rect x="688.5" y="364.5" width="99.8" height="30.5" fill="none" stroke="#a4a4a4" stroke-width="1" stroke-dasharray="6.4 4"/><rect x="129.5" y="433.5" width="128.0" height="46.5" fill="none" stroke="#a4a4a4" stroke-width="1" stroke-dasharray="6.4 4"/><rect x="257.5" y="433.5" width="43.5" height="46.5" fill="none" stroke="#a4a4a4" stroke-width="1" stroke-dasharray="6.4 4"/><rect x="565.5" y="433.5" width="127.0" height="46.5" fill="none" stroke="#a4a4a4" stroke-width="1" stroke-dasharray="6.4 4"/><rect x="692.5" y="433.5" width="54.8" height="46.5" fill="none" stroke="#a4a4a4" stroke-width="1" stroke-dasharray="6.4 4"/><rect x="120.5" y="800.5" width="240.5" height="46.0" fill="none" stroke="#a4a4a4" stroke-width="1" stroke-dasharray="6.4 4"/><rect x="120.5" y="1062.5" width="210.0" height="46.0" fill="none" stroke="#a4a4a4" stroke-width="1" stroke-dasharray="6.4 4"/><rect x="120.5" y="1139.5" width="250.5" height="166.0" fill="none" stroke="#a4a4a4" stroke-width="1" stroke-dasharray="6.4 4"/><rect x="406.5" y="1342.5" width="244.5" height="34.0" fill="none" stroke="#a4a4a4" stroke-width="1" stroke-dasharray="6.4 4"/><rect x="120.5" y="535.0" width="83.5" height="30.5" fill="none" stroke="#a4a4a4" stroke-width="1" stroke-dasharray="6.4 4"/><rect x="563.5" y="535.0" width="54.0" height="30.5" fill="none" stroke="#a4a4a4" stroke-width="1" stroke-dasharray="6.4 4"/><rect x="120.5" y="598.5" width="75.0" height="30.0" fill="none" stroke="#a4a4a4" stroke-width="1" stroke-dasharray="6.4 4"/><rect x="563.5" y="598.5" width="74.0" height="30.0" fill="none" stroke="#a4a4a4" stroke-width="1" stroke-dasharray="6.4 4"/><rect x="120.5" y="662.0" width="123.0" height="31.0" fill="none" stroke="#a4a4a4" stroke-width="1" stroke-dasharray="6.4 4"/><rect x="563.5" y="662.0" width="122.5" height="31.0" fill="none" stroke="#a4a4a4" stroke-width="1" stroke-dasharray="6.4 4"/><rect x="120.5" y="725.5" width="111.5" height="30.0" fill="none" stroke="#a4a4a4" stroke-width="1" stroke-dasharray="6.4 4"/><rect x="563.5" y="725.5" width="111.0" height="30.0" fill="none" stroke="#a4a4a4" stroke-width="1" stroke-dasharray="6.4 4"/></svg><span class="t" style="left:288.9px;top:192.8px;font-size:44.0px;color:#24272d;letter-spacing:-1.32px;font-weight:700;">CAR REPAIR ESTIMATE</span>
<span class="t" style="left:124.0px;top:372.0px;font-size:17.1px;color:#000;letter-spacing:-0.41px;font-weight:700;">Estimate Date</span>
<span class="t" style="left:411.0px;top:372.0px;font-size:17.1px;color:#000;letter-spacing:-0.39px;font-weight:700;">Estimate Number</span>
<span class="t" style="left:692.0px;top:372.0px;font-size:17.1px;color:#000;letter-spacing:-0.36px;font-weight:700;">Work Order</span>
<span class="t" style="left:131.9px;top:442.0px;font-size:28.6px;color:#000;letter-spacing:-0.31px;font-weight:700;">Prepared</span>
<span class="t" style="left:259.9px;top:442.0px;font-size:28.6px;color:#000;letter-spacing:-0.70px;font-weight:700;">By</span>
<span class="t" style="left:567.9px;top:442.0px;font-size:28.6px;color:#000;letter-spacing:-0.31px;font-weight:700;">Prepared</span>
<span class="t" style="left:695.9px;top:442.0px;font-size:28.6px;color:#000;letter-spacing:-0.26px;font-weight:700;">For</span>
<span class="t" style="left:123.7px;top:542.0px;font-size:17.1px;color:#000;letter-spacing:-0.57px;font-weight:700;">Company</span>
<span class="t" style="left:566.7px;top:542.0px;font-size:17.1px;color:#000;letter-spacing:-0.33px;font-weight:700;">Client</span>
<span class="t" style="left:124.8px;top:605.5px;font-size:17.1px;color:#000;letter-spacing:-0.48px;font-weight:700;">Address</span>
<span class="t" style="left:567.8px;top:605.5px;font-size:17.1px;color:#000;letter-spacing:-0.48px;font-weight:700;">Address</span>
<span class="t" style="left:123.7px;top:669.0px;font-size:17.1px;color:#000;letter-spacing:-0.19px;font-weight:700;">City, State, Zip</span>
<span class="t" style="left:566.7px;top:669.0px;font-size:17.1px;color:#000;letter-spacing:-0.19px;font-weight:700;">City, State, Zip</span>
<span class="t" style="left:123.7px;top:732.5px;font-size:17.1px;color:#000;letter-spacing:-0.34px;font-weight:700;">Phone, Email</span>
<span class="t" style="left:566.7px;top:732.5px;font-size:17.1px;color:#000;letter-spacing:-0.34px;font-weight:700;">Phone, Email</span>
<span class="t" style="left:124.0px;top:809.3px;font-size:28.6px;color:#000;letter-spacing:-0.63px;font-weight:700;">Service Summary</span>
<span class="t" style="left:122.9px;top:1070.8px;font-size:28.6px;color:#000;letter-spacing:-0.48px;font-weight:700;">Estimated Cost</span>
<span class="t" style="left:124.0px;top:1146.8px;font-size:17.1px;color:#000;letter-spacing:-0.42px;font-weight:700;">SUBTOTAL:________________</span>
<span class="t" style="left:124.0px;top:1191.8px;font-size:17.1px;color:#000;letter-spacing:-0.42px;font-weight:700;">DISCOUNT:________________</span>
<span class="t" style="left:125.0px;top:1236.8px;font-size:17.1px;color:#000;letter-spacing:-0.42px;font-weight:700;">TAX:________________</span>
<span class="t" style="left:125.0px;top:1281.8px;font-size:17.1px;color:#000;letter-spacing:-0.42px;font-weight:700;">TOTAL:________________</span>
<span class="t" style="left:409.4px;top:1348.4px;font-size:22.6px;color:#000;letter-spacing:-0.78px;font-style:italic;">Thanks for your business.</span></article><div class="next-page" style="left:608px;top:1502.75px"></div><svg class="ico" width="2308" height="1507" viewBox="691 256 2308 1507"><path d="M2977,286 H2988.600 L2982.800,278.700 Z" fill="#c6c6c6"/><path d="M2977,1737 H2988.600 L2982.800,1744.300 Z" fill="#c6c6c6"/><rect x="2975" y="311" width="15.700" height="702" rx="7.800" fill="#d6d6d6"/><path d="M2999.500,256 V1763" stroke="#d3d3d6" stroke-width="1"/><path d="M3028,306.400 H3052 M3019.700,322.400 H3040" stroke="#444" stroke-width="1.600"/><circle cx="3024.200" cy="306.400" r="3.600" fill="#f3f4f6" stroke="#444" stroke-width="1.600"/><circle cx="3044" cy="322.400" r="3.600" fill="#f3f4f6" stroke="#444" stroke-width="1.600"/><path d="M3047.800,322.400 H3052" stroke="#444" stroke-width="1.600"/></svg></section></main>
<footer class="statusbar"><svg class="ico" width="3071" height="61" viewBox="0 1763 3071 61"><path d="M47.95,1775.95 H69.05 L77.05,1783.95 V1809.05 a1,1 0 0 1 -1,1 H47.95 a1,1 0 0 1 -1,-1 V1776.95 a1,1 0 0 1 1,-1 Z" fill="#fff" stroke="#9a9a9a" stroke-width="1.9"/><path d="M69.05,1775.95 V1783.95 H77.05 Z" fill="#9a9a9a"/><path d="M70,1793 H56 M60.500,1788.600 L56,1793 L60.500,1797.400" fill="none" stroke="#cfcfcf" stroke-width="1.800"/><path d="M107.95,1775.95 H129.05 L137.05,1783.95 V1809.05 a1,1 0 0 1 -1,1 H107.95 a1,1 0 0 1 -1,-1 V1776.95 a1,1 0 0 1 1,-1 Z" fill="#fff" stroke="#9a9a9a" stroke-width="1.9"/><path d="M129.05,1775.95 V1783.95 H137.05 Z" fill="#9a9a9a"/><path d="M114,1793 H128 M123.500,1788.600 L128,1793 L123.500,1797.400" fill="none" stroke="#cfcfcf" stroke-width="1.800"/><path d="M156.75,1775.500 V1810.750" stroke="#fff" stroke-width="2"/><path d="M2144,1775.500 V1810.750" stroke="#fff" stroke-width="2"/><path d="M2335.75,1775.500 V1810.750" stroke="#fff" stroke-width="2"/><path d="M2523,1775.500 V1810.750" stroke="#fff" stroke-width="2"/><g fill="none" stroke="#666" stroke-width="2"><path d="M1431.800,1777.500 V1808"/><path d="M1455,1778 L1440,1793 L1455,1808"/><path d="M1512.500,1778 L1497.500,1793 L1512.500,1808"/><path d="M1783,1778 L1798,1793 L1783,1808"/><path d="M1840.500,1778 L1855.500,1793 L1840.500,1808"/><path d="M1864,1777.500 V1808"/></g><rect x="1541.250" y="1776" width="212.500" height="34.500" fill="#fff" stroke="#e4e4e4" stroke-width="1"/><rect x="2349.5" y="1769.500" width="47" height="46.500" fill="#dce1ee" stroke="#c9cfe0" stroke-width="1"/><rect x="2409.5" y="1769.500" width="47" height="46.500" fill="#dce1ee" stroke="#c9cfe0" stroke-width="1"/><path d="M2166.95,1776.45 H2188.05 L2196.05,1784.45 V1809.05 a1,1 0 0 1 -1,1 H2166.95 a1,1 0 0 1 -1,-1 V1777.45 a1,1 0 0 1 1,-1 Z" fill="#fff" stroke="#666" stroke-width="1.9"/><path d="M2188.05,1776.45 V1784.45 H2196.05 Z" fill="#666"/><path d="M2173.600,1788 L2176,1786.500 V1800.500 M2185.600,1788 L2188,1786.500 V1800.500" fill="none" stroke="#ff8279" stroke-width="1.700"/><rect x="2180" y="1789.500" width="1.800" height="2" fill="#ff8279"/><rect x="2180" y="1796" width="1.800" height="2" fill="#ff8279"/><path d="M2226.95,1776.45 H2248.05 L2256.05,1784.45 V1809.05 a1,1 0 0 1 -1,1 H2226.95 a1,1 0 0 1 -1,-1 V1777.45 a1,1 0 0 1 1,-1 Z" fill="#fff" stroke="#666" stroke-width="1.9"/><path d="M2248.05,1776.45 V1784.45 H2256.05 Z" fill="#666"/><path d="M2235.75,1789 L2240.75,1783.5 L2245.75,1789 Z M2235.75,1797 L2240.75,1802.5 L2245.75,1797 Z M2236.25,1788.5 L2231.25,1793 L2236.25,1797.5 Z M2245.25,1788.5 L2250.25,1793 L2245.25,1797.5 Z" fill="#ff8279"/><path d="M2286.95,1776.45 H2308.05 L2316.05,1784.45 V1809.05 a1,1 0 0 1 -1,1 H2286.95 a1,1 0 0 1 -1,-1 V1777.45 a1,1 0 0 1 1,-1 Z" fill="#fff" stroke="#666" stroke-width="1.9"/><path d="M2308.05,1776.45 V1784.45 H2316.05 Z" fill="#666"/><path d="M2296.25,1788.5 L2291.25,1793 L2296.25,1797.5 Z M2305.25,1788.5 L2310.25,1793 L2305.25,1797.5 Z" fill="#ff8279"/><rect x="2358" y="1776.500" width="30" height="7" rx="1.500" fill="#fff" stroke="#666" stroke-width="1.900"/><path d="M2359,1787.700 H2381 L2388,1794.700 V1808.800 a1,1 0 0 1 -1,1 H2359 a1,1 0 0 1 -1,-1 V1788.700 a1,1 0 0 1 1,-1 Z" fill="#fff" stroke="#666" stroke-width="1.900"/><path d="M2381,1787.700 V1794.700 H2388 Z" fill="#666"/><path d="M2364,1797.500 H2375.500 M2364,1803 H2372" stroke="#ff8279" stroke-width="1.700"/><path d="M2418.95,1776.45 H2440.05 L2448.05,1784.45 V1809.05 a1,1 0 0 1 -1,1 H2418.95 a1,1 0 0 1 -1,-1 V1777.45 a1,1 0 0 1 1,-1 Z" fill="#fff" stroke="#666" stroke-width="1.9"/><path d="M2440.05,1776.45 V1784.45 H2448.05 Z" fill="#666"/><path d="M2424.500,1787 H2441 M2424.500,1793.500 H2436 M2424.500,1800 H2441" stroke="#ff8279" stroke-width="1.700"/><path d="M2478.95,1776.45 H2484.55 L2490.55,1782.45 V1809.05 a1,1 0 0 1 -1,1 H2478.95 a1,1 0 0 1 -1,-1 V1777.45 a1,1 0 0 1 1,-1 Z" fill="#fff" stroke="#666" stroke-width="1.9"/><path d="M2484.55,1776.45 V1782.45 H2490.55 Z" fill="#666"/><path d="M2496.45,1776.45 H2502.05 L2508.05,1782.45 V1809.05 a1,1 0 0 1 -1,1 H2496.45 a1,1 0 0 1 -1,-1 V1777.45 a1,1 0 0 1 1,-1 Z" fill="#fff" stroke="#666" stroke-width="1.9"/><path d="M2502.05,1776.45 V1782.45 H2508.05 Z" fill="#666"/><path d="M2481.500,1792 H2487.500 M2481.500,1798 H2487.500 M2499,1792 H2505 M2499,1798 H2505" stroke="#ff8279" stroke-width="1.600"/><path d="M2618.750,1788.200 H2635.750 L2627.250,1797 Z" fill="#666"/><circle cx="2685.700" cy="1792.700" r="16.400" fill="#fff" stroke="#666" stroke-width="1.900"/><rect x="2677" y="1790.800" width="17.500" height="4" fill="#666"/><circle cx="2946" cy="1792.700" r="16.400" fill="#fff" stroke="#666" stroke-width="1.900"/><rect x="2937.200" y="1790.800" width="17.500" height="4" fill="#666"/><rect x="2944" y="1784" width="4" height="17.500" fill="#666"/><rect x="2726" y="1790" width="180" height="6" fill="#c9c9c9"/><rect x="2726" y="1790" width="60" height="6" fill="#666"/><ellipse cx="2787.200" cy="1793" rx="9.500" ry="10.300" fill="#fff" stroke="#666" stroke-width="1.700"/><path d="M2997,1777 H3005.5 L2996,1786.5 V1778 a1,1 0 0 1 1,-1 Z M3027,1777 H3018.5 L3028,1786.5 V1778 a1,1 0 0 0 -1,-1 Z M2997,1809 H3005.5 L2996,1799.5 V1808 a1,1 0 0 0 1,1 Z M3027,1809 H3018.5 L3028,1799.5 V1808 a1,1 0 0 1 -1,1 Z" fill="#666"/><path d="M3012,1788.300 L3016.700,1793 L3012,1797.700 L3007.300,1793 Z" fill="#ff8279"/></svg><span class="t" style="left:195.8px;top:20.5px;font-size:24px;color:#666;letter-spacing:-0.10px;">A4(210×297mm)</span>
<span class="t" style="left:1622.5px;top:20.5px;font-size:24px;color:#444;letter-spacing:0.62px;">1 / 2</span>
<span class="t" style="left:2554.5px;top:19.2px;font-size:24px;color:#666;letter-spacing:-0.75px;">67%</span></footer>
</div></body></html>
